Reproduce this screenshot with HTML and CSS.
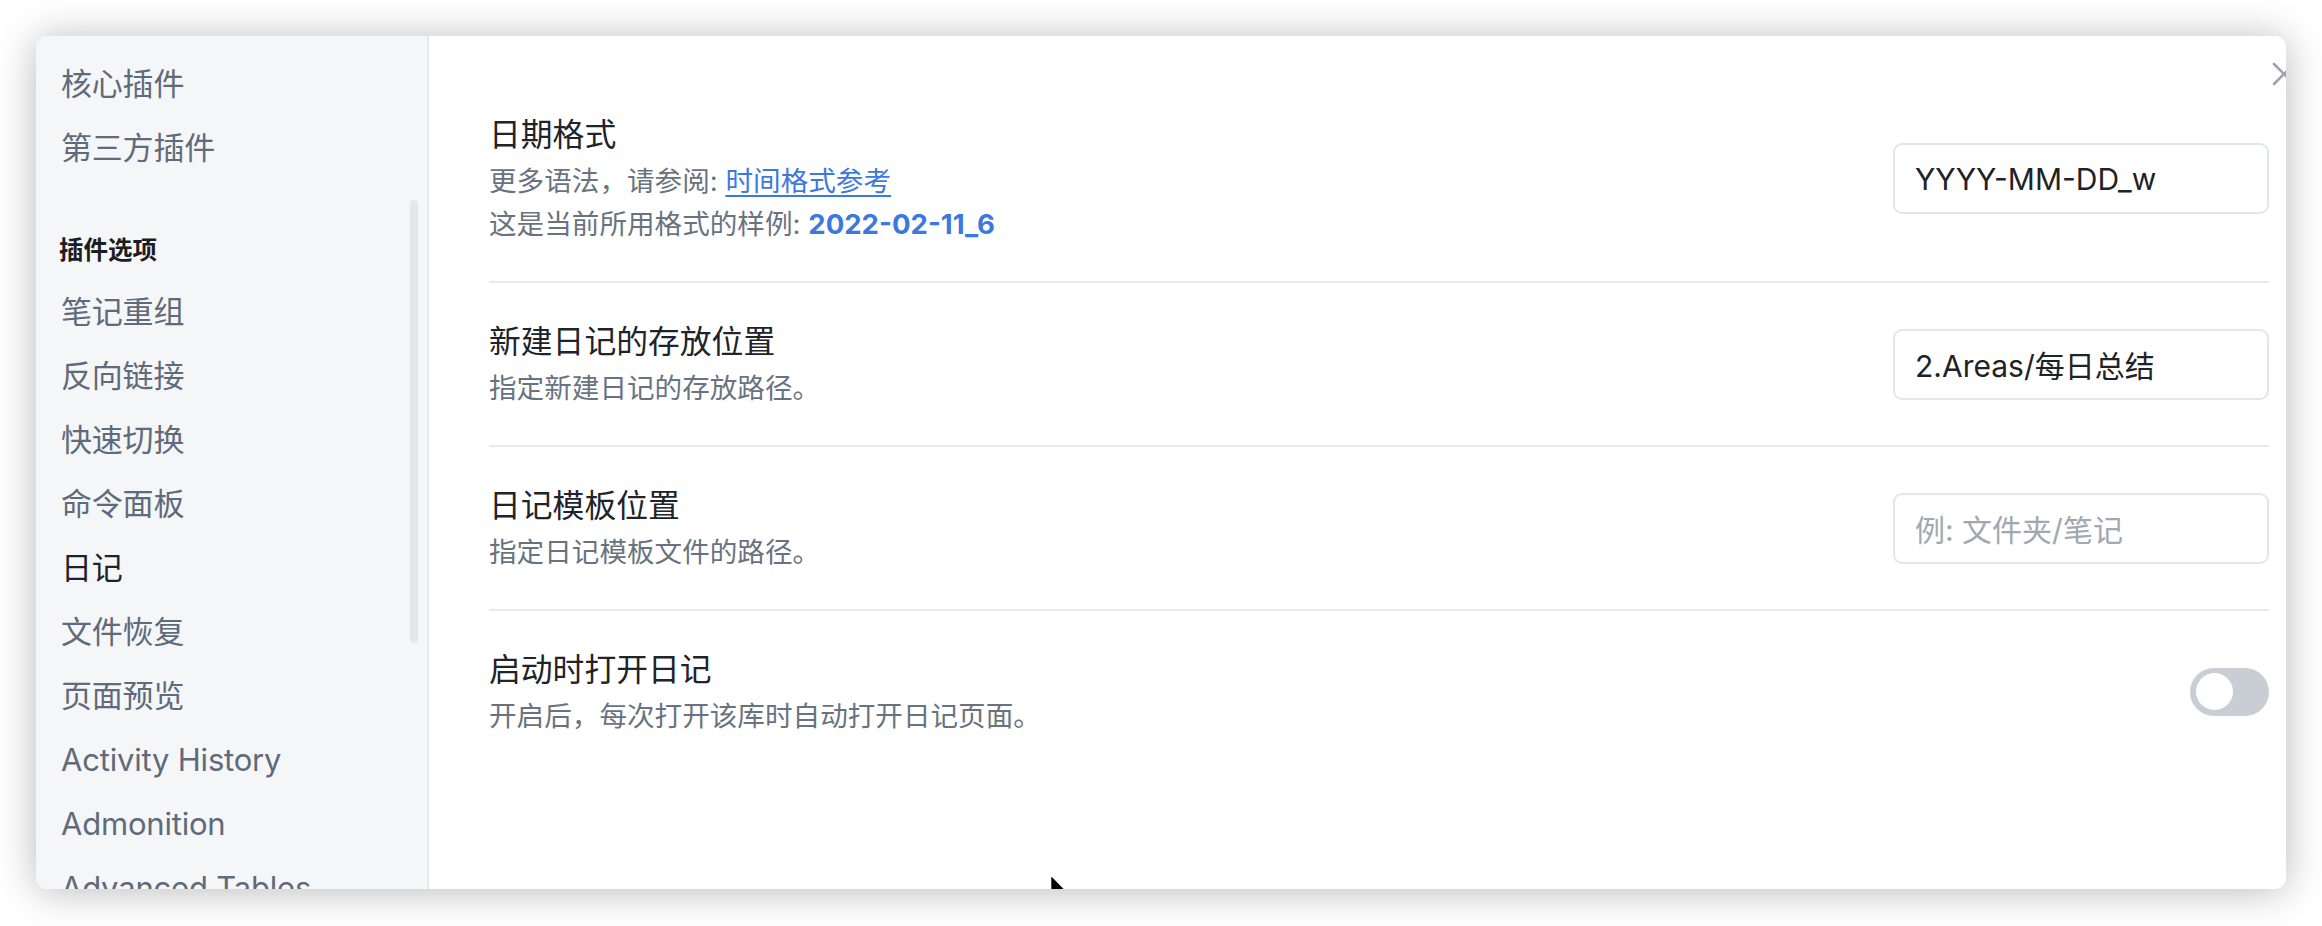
FILE: index.html
```html
<!DOCTYPE html>
<html lang="zh-CN">
<head>
<meta charset="utf-8">
<title>日记 设置</title>
<link rel="stylesheet" href="styles.css">
</head>
<body>
<div class="modal">
  <nav class="sidebar">
    <div class="nav-item">核心插件</div>
    <div class="nav-item">第三方插件</div>
    <div class="nav-header">插件选项</div>
    <div class="nav-item">笔记重组</div>
    <div class="nav-item">反向链接</div>
    <div class="nav-item">快速切换</div>
    <div class="nav-item">命令面板</div>
    <div class="nav-item active">日记</div>
    <div class="nav-item">文件恢复</div>
    <div class="nav-item">页面预览</div>
    <div class="nav-item">Activity History</div>
    <div class="nav-item">Admonition</div>
    <div class="nav-item">Advanced Tables</div>
    <div class="scroll-thumb"></div>
  </nav>
  <main class="content">
    <div class="setting">
      <div class="info">
        <div class="name">日期格式</div>
        <div class="desc">更多语法，请参阅: <a class="link" href="#">时间格式参考</a></div>
        <div class="desc">这是当前所用格式的样例: <b class="sample">2022-02-11_6</b></div>
      </div>
      <div class="control"><div class="input">YYYY-MM-DD_w</div></div>
    </div>
    <div class="setting">
      <div class="info">
        <div class="name">新建日记的存放位置</div>
        <div class="desc">指定新建日记的存放路径。</div>
      </div>
      <div class="control"><div class="input">2.Areas/每日总结</div></div>
    </div>
    <div class="setting">
      <div class="info">
        <div class="name">日记模板位置</div>
        <div class="desc">指定日记模板文件的路径。</div>
      </div>
      <div class="control"><div class="input placeholder">例: 文件夹/笔记</div></div>
    </div>
    <div class="setting last">
      <div class="info">
        <div class="name">启动时打开日记</div>
        <div class="desc">开启后，每次打开该库时自动打开日记页面。</div>
      </div>
      <div class="control"><div class="toggle"><div class="knob"></div></div></div>
    </div>
  </main>
  <div class="close">
    <svg width="24" height="24" viewBox="0 0 24 24"><path d="M2 2 L22 22 M22 2 L2 22" stroke="#9ca3ab" stroke-width="2.6" fill="none" stroke-linecap="round"/></svg>
  </div>
  <div class="cursor">
    <svg width="22" height="32" viewBox="0 0 22 32"><path d="M1.5 1.5 L1.5 25 L7 19.5 L11 28.5 L14.5 27 L10.6 18.3 L18 18.3 Z" fill="#000" stroke="#fff" stroke-width="1.6" stroke-linejoin="round"/></svg>
  </div>
</div>
</body>
</html>
```
FILE: styles.css
```css
html, body {
  margin: 0;
  padding: 0;
  background: #ffffff;
}
body {
  width: 2322px;
  height: 926px;
  overflow: hidden;
  font-family: Inter, "Noto Sans CJK SC", sans-serif;
}
.modal {
  position: relative;
  margin: 36px 0 0 36px;
  width: 2250px;
  height: 853px;
  border-radius: 11px;
  overflow: hidden;
  display: flex;
  background: #ffffff;
  box-shadow: 0 2px 40px rgba(0, 0, 0, 0.28);
}
.sidebar {
  position: relative;
  flex: none;
  width: 393px;
  box-sizing: border-box;
  background: #f5f6f8;
  border-right: 2px solid #e6e8eb;
  padding: 16px 0 0 25px;
  overflow: hidden;
}
.nav-item {
  font-size: 31px;
  line-height: 40px;
  padding: 12px 0;
  color: #5f6a7a;
  white-space: nowrap;
  letter-spacing: -0.2px;
}
.nav-item.active {
  color: #1f2226;
}
.nav-header {
  font-size: 24.5px;
  line-height: 30px;
  font-weight: 700;
  color: #1c1d20;
  margin: 55px 0 15px -2px;
}
.scroll-thumb {
  position: absolute;
  left: 374px;
  top: 164px;
  width: 8px;
  height: 443px;
  border-radius: 4px;
  background: #e4e7eb;
}
.content {
  flex: 1;
  padding: 40px 17px 0 60px;
}
.setting {
  display: flex;
  align-items: center;
  padding: 35.5px 0;
  border-bottom: 2px solid #e6e9ed;
}
.setting.last {
  border-bottom: none;
}
.info {
  flex: 1;
}
.name {
  font-size: 31.8px;
  line-height: 46px;
  color: #202328;
  margin-bottom: 2px;
}
.desc {
  font-size: 27.6px;
  line-height: 43px;
  color: #697380;
}
.link {
  color: #3b78e0;
  text-decoration: underline;
  text-underline-offset: 4px;
  text-decoration-thickness: 2px;
}
.sample {
  color: #3b78e0;
  font-weight: 700;
}
.control {
  flex: none;
}
.input {
  box-sizing: border-box;
  width: 376px;
  height: 71px;
  border: 2px solid #e3e6ea;
  border-radius: 9px;
  padding: 0 20px;
  display: flex;
  align-items: center;
  font-size: 30px;
  color: #1f2226;
  background: #ffffff;
}
.input.placeholder {
  color: #a1a8b1;
}
.toggle {
  box-sizing: border-box;
  width: 79px;
  height: 48px;
  border-radius: 24px;
  background: #c9cdd4;
  padding: 5px 6px;
}
.knob {
  width: 37px;
  height: 37px;
  border-radius: 50%;
  background: #ffffff;
}
.close {
  position: absolute;
  top: 26px;
  right: -10px;
  width: 24px;
  height: 24px;
}
.cursor {
  position: absolute;
  left: 1013px;
  top: 837px;
}
```
